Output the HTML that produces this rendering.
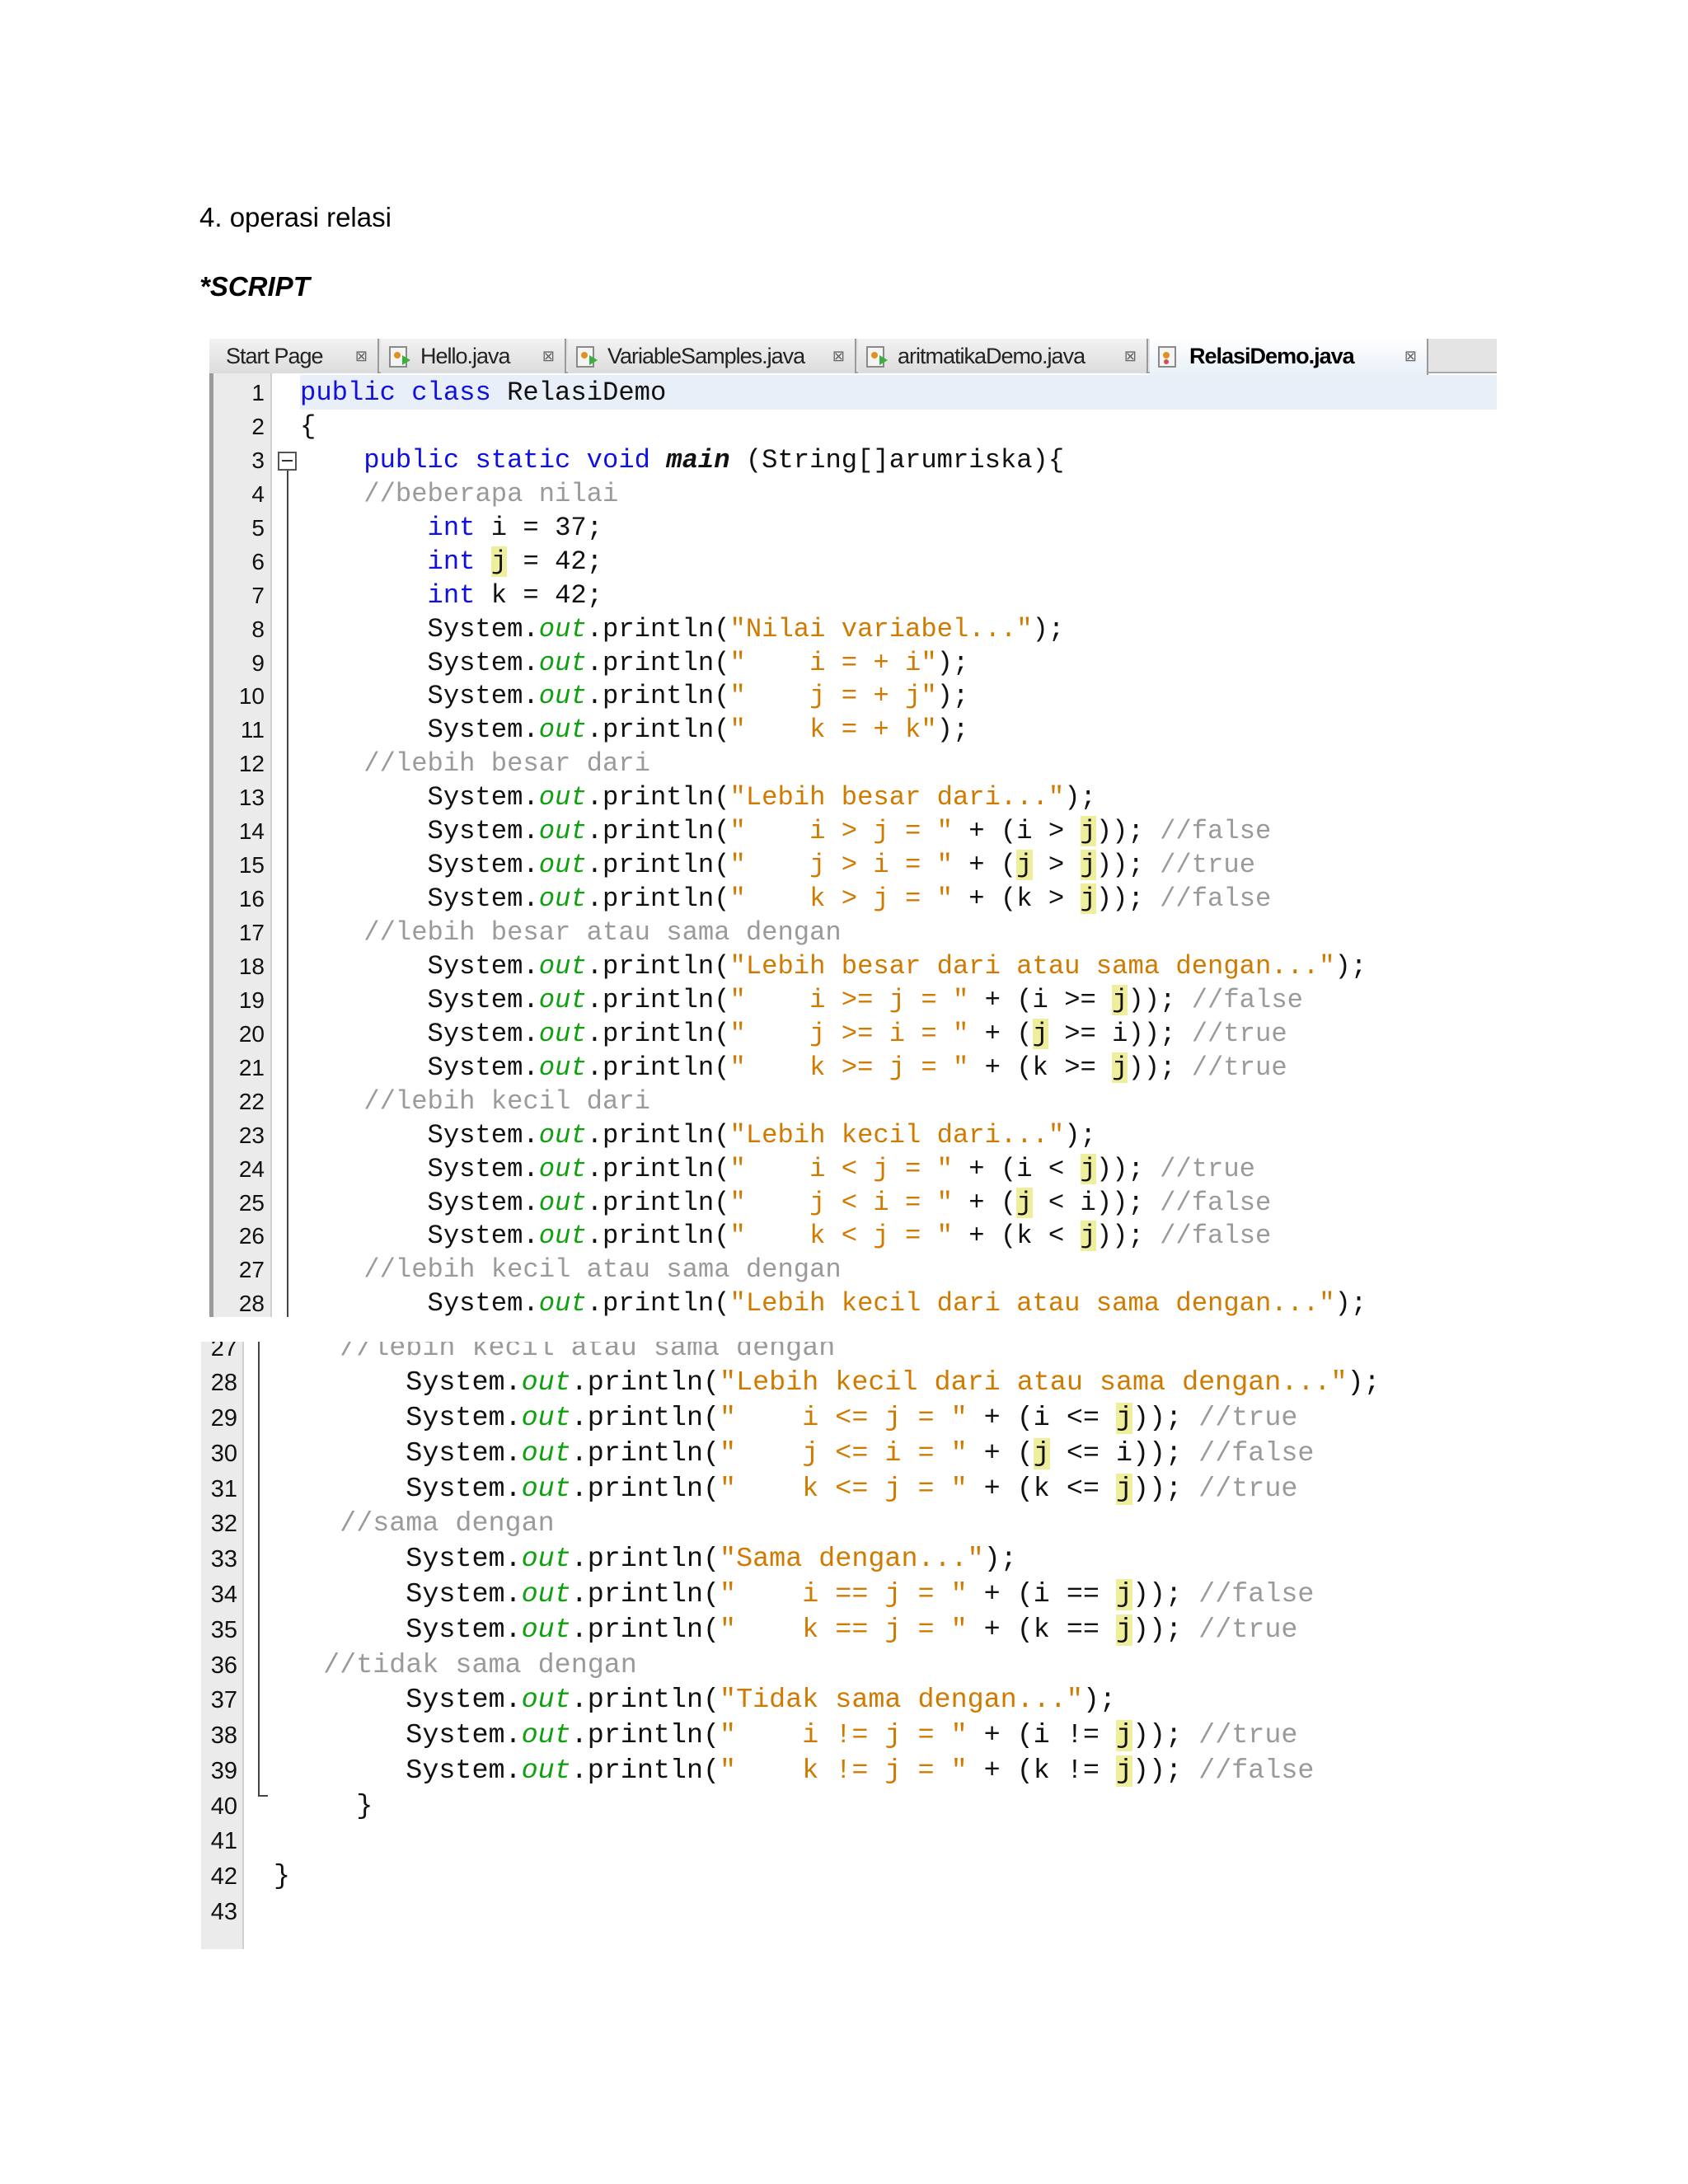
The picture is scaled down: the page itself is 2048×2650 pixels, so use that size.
<!DOCTYPE html>
<html><head><meta charset="utf-8">
<style>
*{margin:0;padding:0;box-sizing:border-box}
body{width:2048px;height:2650px;background:#fff;position:relative;overflow:hidden;font-family:"Liberation Sans",sans-serif}
.t{position:absolute;color:#000}
.code{position:absolute;font-family:"Liberation Mono",monospace;white-space:pre;color:#111}
.k{color:#1010e0}.s{color:#d07a00}.c{color:#9a9a9a}.o{color:#10a010;font-style:italic}
.h{background:#eeee9c}.m{font-weight:bold;font-style:italic}
.num{position:absolute;font-family:"Liberation Sans",sans-serif;text-align:right;color:#111;white-space:pre}
.tab{position:absolute;top:0;height:42px;border-right:2px solid #9a9a9a;background:linear-gradient(#f2f2f2,#dcdcdc);font-size:27px;letter-spacing:-1px;color:#222;line-height:42px;white-space:nowrap}
.tab .x{position:absolute;right:12px;top:0;font-size:18px;color:#666;letter-spacing:0}
.tab svg{position:absolute;left:8px;top:8px}
</style></head><body>
<div class="t" style="left:242px;top:245px;font-size:33px">4. operasi relasi</div>
<div class="t" style="left:242px;top:329px;font-size:33px;font-weight:bold;font-style:italic">*SCRIPT</div>

<!-- panel 1 -->
<div style="position:absolute;left:254px;top:411px;width:1562px;height:1187px;overflow:hidden">
 <div style="position:absolute;left:0;top:0;width:1562px;height:42px;background:#e4e4e4;border-bottom:2px solid #a8a8a8"></div>
 <div class="tab" style="left:0;width:206px;padding-left:20px">Start Page<span class="x">⊠</span></div>
 <div class="tab" style="left:208px;width:225px;padding-left:48px"><svg width="32" height="28"><rect x="3" y="2" width="20" height="24" fill="#f4f4f4" stroke="#8a8a8a" stroke-width="2"/><circle cx="12" cy="12" r="4" fill="#e09020"/><path d="M18 12 L28 18 L18 24Z" fill="#3cb03c"/></svg>Hello.java<span class="x">⊠</span></div>
 <div class="tab" style="left:435px;width:350px;padding-left:48px"><svg width="32" height="28"><rect x="3" y="2" width="20" height="24" fill="#f4f4f4" stroke="#8a8a8a" stroke-width="2"/><circle cx="12" cy="12" r="4" fill="#e09020"/><path d="M18 12 L28 18 L18 24Z" fill="#3cb03c"/></svg>VariableSamples.java<span class="x">⊠</span></div>
 <div class="tab" style="left:787px;width:352px;padding-left:48px"><svg width="32" height="28"><rect x="3" y="2" width="20" height="24" fill="#f4f4f4" stroke="#8a8a8a" stroke-width="2"/><circle cx="12" cy="12" r="4" fill="#e09020"/><path d="M18 12 L28 18 L18 24Z" fill="#3cb03c"/></svg>aritmatikaDemo.java<span class="x">⊠</span></div>
 <div class="tab" style="left:1141px;width:338px;padding-left:48px;background:linear-gradient(#ffffff,#e8f0f8);height:44px;font-weight:bold;color:#000"><svg width="32" height="28"><rect x="3" y="2" width="20" height="24" fill="#f4f4f4" stroke="#8a8a8a" stroke-width="2"/><circle cx="12" cy="12" r="4" fill="#e09020"/><circle cx="12" cy="20" r="3" fill="#d05050"/></svg>RelasiDemo.java<span class="x" style="font-weight:normal">⊠</span></div>
 <div style="position:absolute;left:0;top:42px;width:5px;height:1145px;background:#9a9a9a"></div>
 <div style="position:absolute;left:5px;top:42px;width:71px;height:1145px;background:#ebebeb;border-right:2px solid #d0d0d0"></div>
 <div style="position:absolute;left:110px;top:44px;width:1452px;height:42px;background:#e9eff8"></div>
 <div style="position:absolute;left:83px;top:137px;width:23px;height:23px;border:2px solid #555;background:#fff"></div>
 <div style="position:absolute;left:88px;top:147px;width:13px;height:2px;background:#333"></div>
 <div style="position:absolute;left:94px;top:160px;width:2px;height:1030px;background:#444"></div>
</div>
<div class="num" style="left:259px;top:457px;width:62px;font-size:28px;line-height:40.94px">1
2
3
4
5
6
7
8
9
10
11
12
13
14
15
16
17
18
19
20
21
22
23
24
25
26
27
28</div>
<div class="code" style="left:364px;top:457px;font-size:32.2px;line-height:40.94px"><span class="k">public class</span> RelasiDemo
{
    <span class="k">public static void</span> <span class="m">main</span> (String[]arumriska){
    <span class="c">//beberapa nilai</span>
        <span class="k">int</span> i = 37;
        <span class="k">int</span> <span class="h">j</span> = 42;
        <span class="k">int</span> k = 42;
        System.<span class="o">out</span>.println(<span class="s">"Nilai variabel..."</span>);
        System.<span class="o">out</span>.println(<span class="s">"    i = + i"</span>);
        System.<span class="o">out</span>.println(<span class="s">"    j = + j"</span>);
        System.<span class="o">out</span>.println(<span class="s">"    k = + k"</span>);
    <span class="c">//lebih besar dari</span>
        System.<span class="o">out</span>.println(<span class="s">"Lebih besar dari..."</span>);
        System.<span class="o">out</span>.println(<span class="s">"    i &gt; j = "</span> + (i &gt; <span class="h">j</span>)); <span class="c">//false</span>
        System.<span class="o">out</span>.println(<span class="s">"    j &gt; i = "</span> + (<span class="h">j</span> &gt; <span class="h">j</span>)); <span class="c">//true</span>
        System.<span class="o">out</span>.println(<span class="s">"    k &gt; j = "</span> + (k &gt; <span class="h">j</span>)); <span class="c">//false</span>
    <span class="c">//lebih besar atau sama dengan</span>
        System.<span class="o">out</span>.println(<span class="s">"Lebih besar dari atau sama dengan..."</span>);
        System.<span class="o">out</span>.println(<span class="s">"    i &gt;= j = "</span> + (i &gt;= <span class="h">j</span>)); <span class="c">//false</span>
        System.<span class="o">out</span>.println(<span class="s">"    j &gt;= i = "</span> + (<span class="h">j</span> &gt;= i)); <span class="c">//true</span>
        System.<span class="o">out</span>.println(<span class="s">"    k &gt;= j = "</span> + (k &gt;= <span class="h">j</span>)); <span class="c">//true</span>
    <span class="c">//lebih kecil dari</span>
        System.<span class="o">out</span>.println(<span class="s">"Lebih kecil dari..."</span>);
        System.<span class="o">out</span>.println(<span class="s">"    i &lt; j = "</span> + (i &lt; <span class="h">j</span>)); <span class="c">//true</span>
        System.<span class="o">out</span>.println(<span class="s">"    j &lt; i = "</span> + (<span class="h">j</span> &lt; i)); <span class="c">//false</span>
        System.<span class="o">out</span>.println(<span class="s">"    k &lt; j = "</span> + (k &lt; <span class="h">j</span>)); <span class="c">//false</span>
    <span class="c">//lebih kecil atau sama dengan</span>
        System.<span class="o">out</span>.println(<span class="s">"Lebih kecil dari atau sama dengan..."</span>);</div>

<!-- panel 2 -->
<div style="position:absolute;left:244px;top:1628px;width:1500px;height:737px;overflow:hidden">
 <div style="position:absolute;left:0;top:0;width:52px;height:737px;background:#ebebeb;border-right:2px solid #d0d0d0"></div>
 <div style="position:absolute;left:69px;top:0;width:2px;height:550px;background:#444"></div>
 <div style="position:absolute;left:69px;top:550px;width:12px;height:2px;background:#444"></div>
 <div class="num" style="left:0;top:-13.4px;width:44px;font-size:29px;line-height:42.77px">27
28
29
30
31
32
33
34
35
36
37
38
39
40
41
42
43</div>
 <div class="code" style="left:88px;top:-13.4px;font-size:33.4px;line-height:42.77px">    <span class="c">//lebih kecil atau sama dengan</span>
        System.<span class="o">out</span>.println(<span class="s">"Lebih kecil dari atau sama dengan..."</span>);
        System.<span class="o">out</span>.println(<span class="s">"    i &lt;= j = "</span> + (i &lt;= <span class="h">j</span>)); <span class="c">//true</span>
        System.<span class="o">out</span>.println(<span class="s">"    j &lt;= i = "</span> + (<span class="h">j</span> &lt;= i)); <span class="c">//false</span>
        System.<span class="o">out</span>.println(<span class="s">"    k &lt;= j = "</span> + (k &lt;= <span class="h">j</span>)); <span class="c">//true</span>
    <span class="c">//sama dengan</span>
        System.<span class="o">out</span>.println(<span class="s">"Sama dengan..."</span>);
        System.<span class="o">out</span>.println(<span class="s">"    i == j = "</span> + (i == <span class="h">j</span>)); <span class="c">//false</span>
        System.<span class="o">out</span>.println(<span class="s">"    k == j = "</span> + (k == <span class="h">j</span>)); <span class="c">//true</span>
   <span class="c">//tidak sama dengan</span>
        System.<span class="o">out</span>.println(<span class="s">"Tidak sama dengan..."</span>);
        System.<span class="o">out</span>.println(<span class="s">"    i != j = "</span> + (i != <span class="h">j</span>)); <span class="c">//true</span>
        System.<span class="o">out</span>.println(<span class="s">"    k != j = "</span> + (k != <span class="h">j</span>)); <span class="c">//false</span>
     }

}
</div>
</div>
</body></html>
